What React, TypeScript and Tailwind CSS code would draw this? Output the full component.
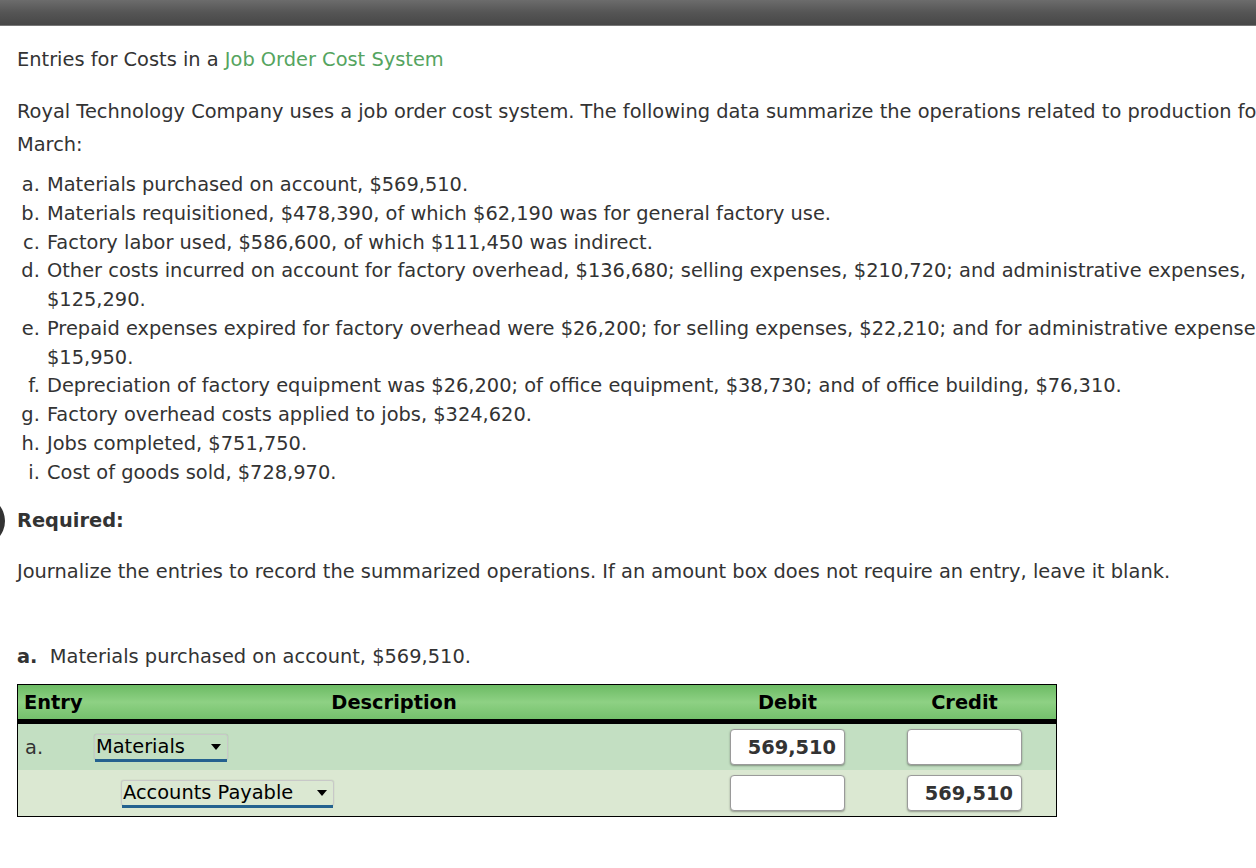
import React from "react";

const items = [
  "Materials purchased on account, $569,510.",
  "Materials requisitioned, $478,390, of which $62,190 was for general factory use.",
  "Factory labor used, $586,600, of which $111,450 was indirect.",
  "Other costs incurred on account for factory overhead, $136,680; selling expenses, $210,720; and administrative expenses, $125,290.",
  "Prepaid expenses expired for factory overhead were $26,200; for selling expenses, $22,210; and for administrative expenses, $15,950.",
  "Depreciation of factory equipment was $26,200; of office equipment, $38,730; and of office building, $76,310.",
  "Factory overhead costs applied to jobs, $324,620.",
  "Jobs completed, $751,750.",
  "Cost of goods sold, $728,970.",
];

const FakeSelect = ({ label, width }: { label: string; width: string }) => (
  <div className={`relative flex h-[26px] items-center rounded-[3px] border border-[#c8c8c8] pl-[1px] pr-[6px] text-[19.4px] text-black shadow-[0_0_1px_rgba(0,0,0,0.3)] ${width}`}>
    <span className="flex-1 whitespace-nowrap leading-[22px]">{label}</span>
    <span className="h-0 w-0 border-x-[5px] border-t-[6px] border-x-transparent border-t-black" />
    <span className="absolute -bottom-[3px] left-0 right-0 h-[3px] bg-[#24628f]" />
  </div>
);

const AmountBox = ({ value }: { value?: string }) => (
  <div className="flex h-[36px] w-[115px] items-center justify-end rounded-[4px] border border-[#9a9a9a] bg-white pr-[8px] text-[19.4px] font-bold text-[#333] shadow-[0_1px_2px_rgba(0,0,0,0.35)]">
    {value}
  </div>
);

export default function App() {
  return (
    <div
      className="w-[1256px] min-h-[868px] overflow-hidden bg-white text-[#333]"
      style={{ fontFamily: '"DejaVu Sans", Verdana, sans-serif' }}
    >
      <div className="h-[26px] bg-gradient-to-b from-[#6c6c6c] via-[#555] to-[#474747] border-b border-[#777]" />
      <div className="w-[1300px] pl-[17px] text-[19.4px]">
        <div className="mt-[23px] leading-[22px]">
          Entries for Costs in a <span className="text-[#55a460]">Job Order Cost System</span>
        </div>
        <p className="mt-[24px] leading-[33px]">
          Royal Technology Company uses a job order cost system. The following data summarize the operations related to production for March:
        </p>
        <ol className="mt-[10px] list-[lower-alpha] pl-[29px] leading-[28.75px]">
          {items.map((t) => (
            <li key={t} className="pl-[1px]">
              {t}
            </li>
          ))}
        </ol>
        <div className="relative mt-[23px] leading-[22px] font-bold">
          <span className="absolute left-[-62px] top-[-14px] h-[50px] w-[50px] rounded-full bg-[#333]" />
          Required:
        </div>
        <p className="mt-[29px] leading-[22px]">
          Journalize the entries to record the summarized operations. If an amount box does not require an entry, leave it blank.
        </p>
        <div className="mt-[63px] leading-[22px]">
          <span className="font-bold">a.</span>&nbsp; Materials purchased on account, $569,510.
        </div>

        <div className="mt-[16px] w-[1040px] border border-black">
          <div className="flex h-[34px] items-center bg-gradient-to-b from-[#6cbb64] via-[#8ed184] to-[#74c16c] font-bold text-black">
            <div className="w-[70px] pl-[6px]">Entry</div>
            <div className="w-[612px] text-center">Description</div>
            <div className="w-[145px] pl-[30px]">
              <div className="w-[115px] text-center">Debit</div>
            </div>
            <div className="pl-[62px]">
              <div className="w-[115px] text-center">Credit</div>
            </div>
          </div>
          <div className="h-[5px] bg-black" />
          <div className="flex h-[46px] items-center bg-[#c3dfc2]">
            <div className="w-[76px] pl-[7px]">a.</div>
            <div className="w-[636px]">
              <FakeSelect label="Materials" width="w-[134px]" />
            </div>
            <div className="w-[177px]">
              <AmountBox value="569,510" />
            </div>
            <AmountBox />
          </div>
          <div className="flex h-[46px] items-center bg-[#dbe8d2]">
            <div className="w-[103px]" />
            <div className="w-[609px]">
              <FakeSelect label="Accounts Payable" width="w-[213px]" />
            </div>
            <div className="w-[177px]">
              <AmountBox />
            </div>
            <AmountBox value="569,510" />
          </div>
        </div>
      </div>
    </div>
  );
}
